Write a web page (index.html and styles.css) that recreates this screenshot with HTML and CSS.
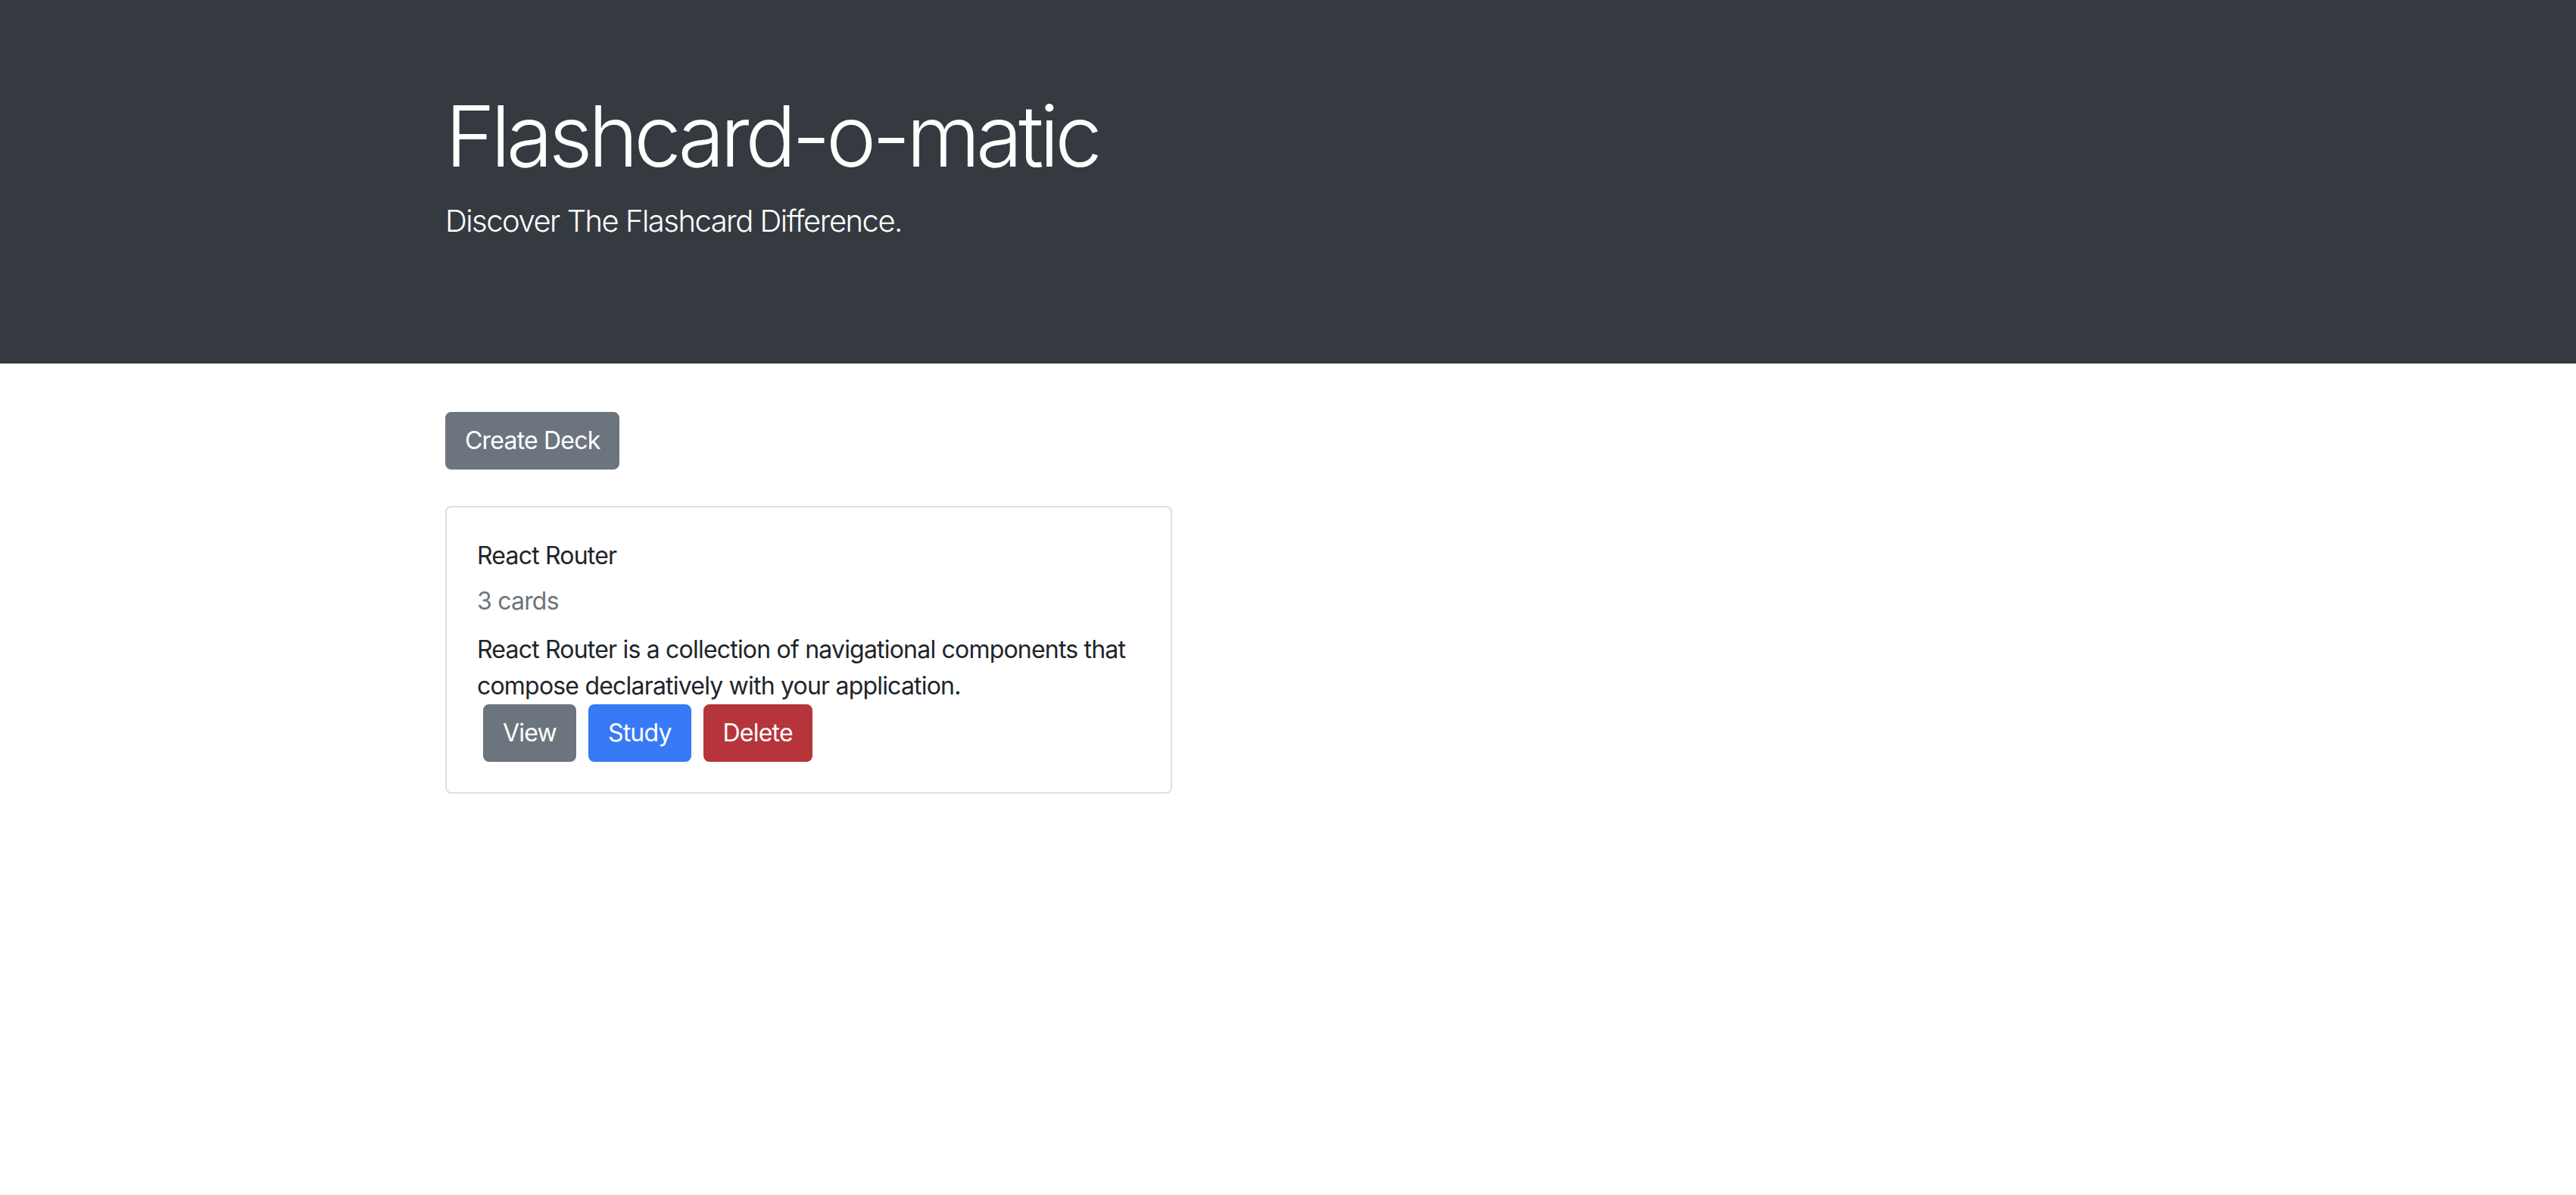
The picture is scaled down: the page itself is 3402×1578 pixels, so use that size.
FILE: index.html
```html
<!DOCTYPE html>
<html lang="en">
<head>
<meta charset="utf-8">
<title>Flashcard-o-matic</title>
<link rel="stylesheet" href="styles.css">
</head>
<body>
<header class="jumbotron">
  <div class="container">
    <h1 class="display">Flashcard-o-matic</h1>
    <p class="lead">Discover The Flashcard Difference.</p>
  </div>
</header>
<main class="container">
  <div class="actions">
    <button class="btn btn-secondary">Create Deck</button>
  </div>
  <div class="card">
    <div class="card-body">
      <div class="card-title">React Router</div>
      <div class="card-subtitle">3 cards</div>
      <p class="card-text">React Router is a collection of navigational components that compose declaratively with your application.</p>
      <div class="card-buttons">
        <button class="btn btn-secondary">View</button>
        <button class="btn btn-primary">Study</button>
        <button class="btn btn-danger">Delete</button>
      </div>
    </div>
  </div>
</main>
</body>
</html>
```

FILE: styles.css
```css
* { box-sizing: border-box; }
html, body { margin: 0; padding: 0; }
body {
  font-family: Inter, "Noto Sans", "Liberation Sans", sans-serif;
  font-size: 32px;
  line-height: 1.5;
  letter-spacing: -0.025em;
  color: #212529;
  background: #ffffff;
}
.container {
  max-width: 2286px;
  margin: 0 auto;
  padding: 0 30px;
}
.jumbotron {
  background: #353a40;
  color: #ffffff;
  padding: 112px 0 126px;
  margin-bottom: 64px;
}
.display {
  margin: 0 0 16px;
  font-size: 112px;
  font-weight: 300;
  line-height: 1.2;
  letter-spacing: -0.05em;
}
.lead {
  margin: 0 0 32px;
  font-size: 40px;
  font-weight: 300;
  line-height: 1.5;
  letter-spacing: -0.038em;
}
.actions { margin-bottom: 48px; }
.btn {
  display: inline-block;
  font-family: inherit;
  font-size: 32px;
  line-height: 48px;
  letter-spacing: inherit;
  padding: 12px 24px;
  border: 2px solid transparent;
  border-radius: 8px;
  color: #ffffff;
  cursor: pointer;
}
.btn-secondary { background: #6c757d; border-color: #6c757d; }
.btn-primary { background: #387af6; border-color: #387af6; }
.btn-danger { background: #b6353b; border-color: #b6353b; }
.card {
  width: 960px;
  border: 2px solid #dfdfdf;
  border-radius: 8px;
  background: #fff;
}
.card-body { padding: 40px; }
.card-title { margin-bottom: 24px; }
.card-subtitle { margin-top: -12px; color: #6c757d; }
.card-text { margin: 16px 0 0; }
.card-buttons { display: flex; }
.card-buttons .btn { margin: 0 8px; }
```
